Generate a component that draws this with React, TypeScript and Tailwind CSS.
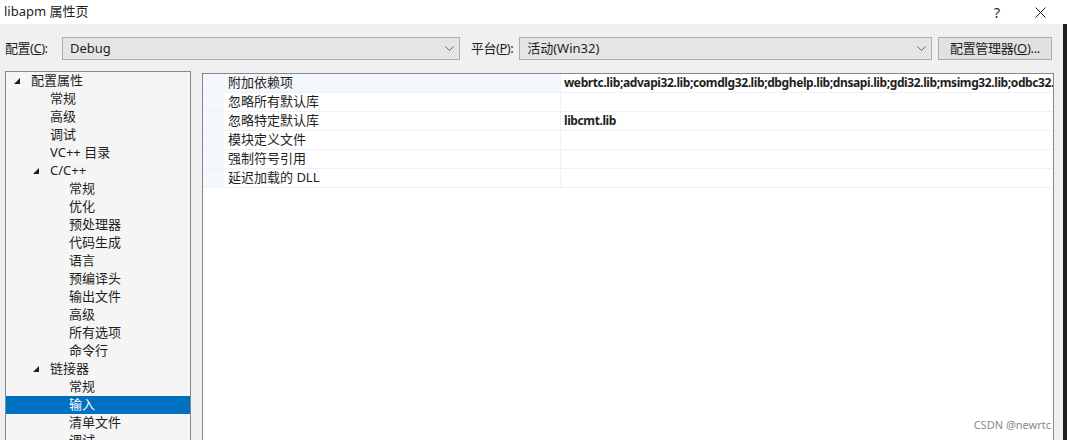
import React from 'react';

const FONT = { fontFamily: '"Noto Sans", "Noto Sans CJK SC", sans-serif' };

interface TreeNode {
    label: string;
    level: number;
    expanded?: boolean;
    selected?: boolean;
}

const treeNodes: TreeNode[] = [
    { label: '配置属性', level: 0, expanded: true },
    { label: '常规', level: 1 },
    { label: '高级', level: 1 },
    { label: '调试', level: 1 },
    { label: 'VC++ 目录', level: 1 },
    { label: 'C/C++', level: 1, expanded: true },
    { label: '常规', level: 2 },
    { label: '优化', level: 2 },
    { label: '预处理器', level: 2 },
    { label: '代码生成', level: 2 },
    { label: '语言', level: 2 },
    { label: '预编译头', level: 2 },
    { label: '输出文件', level: 2 },
    { label: '高级', level: 2 },
    { label: '所有选项', level: 2 },
    { label: '命令行', level: 2 },
    { label: '链接器', level: 1, expanded: true },
    { label: '常规', level: 2 },
    { label: '输入', level: 2, selected: true },
    { label: '清单文件', level: 2 },
    { label: '调试', level: 2 },
];

const properties = [
    {
        name: '附加依赖项',
        value: 'webrtc.lib;advapi32.lib;comdlg32.lib;dbghelp.lib;dnsapi.lib;gdi32.lib;msimg32.lib;odbc32.lib;odbccp32.lib',
        active: true,
    },
    { name: '忽略所有默认库', value: '' },
    { name: '忽略特定默认库', value: 'libcmt.lib' },
    { name: '模块定义文件', value: '' },
    { name: '强制符号引用', value: '' },
    { name: '延迟加载的 DLL', value: '' },
];

function Chevron() {
    return (
        <svg width="9" height="6" viewBox="0 0 9 6" className="shrink-0">
            <polyline points="0.5,0.5 4.5,4.5 8.5,0.5" fill="none" stroke="#606060" strokeWidth="1" />
        </svg>
    );
}

function Expander() {
    return (
        <svg width="6" height="6" viewBox="0 0 6 6" className="shrink-0">
            <polygon points="6,0 6,6 0,6" fill="#1e1e1e" />
        </svg>
    );
}

function Select({ value, width }: { value: string; width: string }) {
    return (
        <div
            className={`${width} h-[23px] flex items-center justify-between pl-[7px] pr-[5px] bg-[#e5e5e5] border border-[#adadad] text-[13px] text-[#1e1e1e]`}
        >
            <span className="whitespace-nowrap">{value}</span>
            <Chevron />
        </div>
    );
}

export default function App(): JSX.Element {
    return (
        <div className="w-[1067px] h-[440px] overflow-hidden flex flex-col bg-[#f0f0f0] text-[#1e1e1e]" style={FONT}>
            {/* title bar */}
            <div className="h-[24px] shrink-0 bg-white flex items-center pl-[4px] text-[13px]">
                <span className="flex-1">libapm 属性页</span>
                <span className="w-[10px] text-[14px] mr-[31px]">?</span>
                <svg width="11" height="11" viewBox="0 0 11 11" className="mr-[21px]">
                    <path d="M0.5 0.5 L10.5 10.5 M10.5 0.5 L0.5 10.5" stroke="#1e1e1e" strokeWidth="1" />
                </svg>
            </div>

            <div className="flex-1 flex min-h-0">
                <div className="flex-1 flex flex-col min-w-0">
                    {/* config row */}
                    <div className="flex items-center h-[23px] mt-[13px] pr-[11px] text-[13px] whitespace-nowrap">
                        <span className="w-[62px] shrink-0 pl-[5px] tracking-[-0.5px]">
                            配置(<span className="underline">C</span>):
                        </span>
                        <Select value="Debug" width="w-[398px] shrink-0" />
                        <span className="ml-[11px] mr-[6px] shrink-0 tracking-[-0.5px]">
                            平台(<span className="underline">P</span>):
                        </span>
                        <Select value="活动(Win32)" width="flex-1 min-w-0" />
                        <div className="ml-[6px] w-[114px] shrink-0 h-[23px] flex items-center justify-center bg-[#e1e1e1] border border-[#adadad] tracking-[-0.3px]">
                            配置管理器(<span className="underline">O</span>)...
                        </div>
                    </div>

                    <div className="flex flex-1 min-h-0 mt-[11px]">
                        {/* tree */}
                        <div className="ml-[5px] w-[186px] border border-[#828790] border-b-0 bg-[#f5f5f5] overflow-hidden">
                            {treeNodes.map((n, i) => (
                                <div
                                    key={i}
                                    className={`h-[18px] flex items-center text-[13px] ${
                                        n.selected ? 'bg-[#0070c0] text-white' : ''
                                    }`}
                                >
                                    <span
                                        className={`flex items-center justify-end w-[17px] pr-[3px] ${
                                            n.level === 0 ? 'ml-[0px]' : n.level === 1 ? 'ml-[19px]' : 'ml-[38px]'
                                        }`}
                                    >
                                        {n.expanded && <Expander />}
                                    </span>
                                    <span className="ml-[8px] whitespace-nowrap">{n.label}</span>
                                </div>
                            ))}
                        </div>

                        {/* property grid */}
                        <div className="ml-[11px] mt-[2px] w-[852px] border border-[#828790] border-b-0 bg-white flex flex-col">
                            {properties.map((p, i) => (
                                <div key={i} className="h-[19px] flex border-b border-[#eef1f6] text-[13px]">
                                    <div className="w-[21px] bg-[#f4f7fb]" />
                                    <div
                                        className={`w-[337px] pl-[4px] flex items-center border-r border-[#eef1f6] ${
                                            p.active ? 'bg-[#f4f7fb]' : ''
                                        }`}
                                    >
                                        {p.name}
                                    </div>
                                    <div className="flex-1 min-w-0 pl-[3px] flex items-center overflow-hidden whitespace-nowrap font-bold text-[12px] tracking-[-0.4px]">
                                        {p.value}
                                    </div>
                                </div>
                            ))}
                            <div className="flex-1 relative">
                                <span className="absolute right-[2px] bottom-[7px] text-[11px] text-[#8a8a8a] font-normal">
                                    CSDN @newrtc
                                </span>
                            </div>
                        </div>
                    </div>
                </div>
                <div className="w-[4px] bg-[#1e1e1e] shrink-0" />
            </div>
        </div>
    );
}
